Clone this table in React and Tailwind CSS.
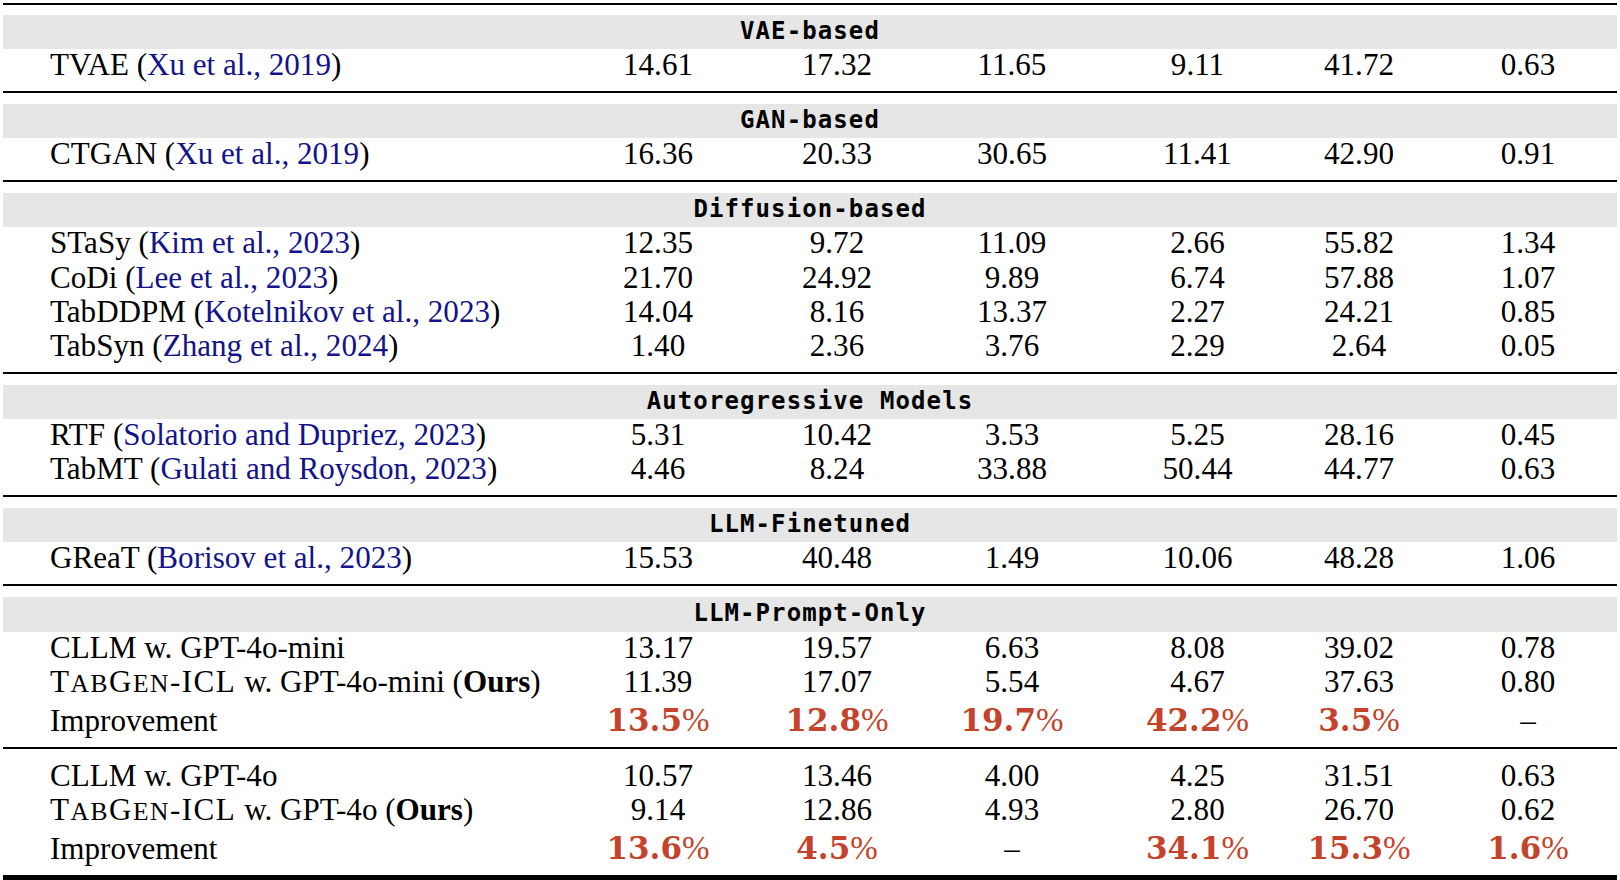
import React from "react";

const COLS = "grid grid-cols-[565.5px_179px_179px_171px_200px_123px_215px]";

function Cite({ children }) {
  return <span className="text-[#13138a]">{children}</span>;
}

function Row({ label, vals }) {
  return (
    <div className={`${COLS} h-[34.13px] text-[31.1px] leading-[32.7px]`}>
      <div className="pl-[47px] whitespace-nowrap">{label}</div>
      {vals.map((v, i) => (
        <div key={i} className="text-center whitespace-nowrap">{v}</div>
      ))}
    </div>
  );
}

function Pct({ v }) {
  if (v === "–") {
    return (
      <div className="text-center text-[31.1px] leading-[42px]">–</div>
    );
  }
  return (
    <div className="text-center whitespace-nowrap font-['DejaVu_Serif',serif] font-bold text-[31px] leading-[41.5px] text-[#c4432a]">
      {v}
      <span className="font-['Liberation_Serif',serif] font-normal text-[33px]">%</span>
    </div>
  );
}

function ImpRow({ vals }) {
  return (
    <div className={`${COLS} h-[39px]`}>
      <div className="pl-[47px] text-[31.1px] leading-[42px] whitespace-nowrap">Improvement</div>
      {vals.map((v, i) => (
        <Pct key={i} v={v} />
      ))}
    </div>
  );
}

function Header({ title }) {
  return (
    <div className="h-[34.13px] bg-[#e6e6e6] text-center font-['DejaVu_Sans_Mono',monospace] font-bold text-[24px] leading-[32.3px] tracking-[1.1px]">
      {title}
    </div>
  );
}

function Rule() {
  return <div className="h-[2px] bg-black" />;
}

function Section({ first, title, children }) {
  return (
    <div className={first ? "pt-[9.8px] pb-[7.7px]" : "pt-[11.3px] pb-[7.7px]"}>
      {title && <Header title={title} />}
      {children}
    </div>
  );
}

const Ours = () => (
  <>
    (<span className="font-bold">Ours</span>)
  </>
);

const SC = () => (
  <span className="tracking-[1.5px]">
    T<span className="text-[0.82em]">AB</span>G<span className="text-[0.82em]">EN</span>-ICL
  </span>
);

export default function App() {
  return (
    <div className="w-[1620px] h-[880px] overflow-hidden bg-white pt-[3px] text-black font-['Liberation_Serif',serif]">
      <div className="ml-[3px] w-[1614px]">
        <Rule />
        <Section first title="VAE-based">
          <Row
            label={<>TVAE (<Cite>Xu et al., 2019</Cite>)</>}
            vals={["14.61", "17.32", "11.65", "9.11", "41.72", "0.63"]}
          />
        </Section>
        <Rule />
        <Section title="GAN-based">
          <Row
            label={<>CTGAN (<Cite>Xu et al., 2019</Cite>)</>}
            vals={["16.36", "20.33", "30.65", "11.41", "42.90", "0.91"]}
          />
        </Section>
        <Rule />
        <Section title="Diffusion-based">
          <Row
            label={<>STaSy (<Cite>Kim et al., 2023</Cite>)</>}
            vals={["12.35", "9.72", "11.09", "2.66", "55.82", "1.34"]}
          />
          <Row
            label={<>CoDi (<Cite>Lee et al., 2023</Cite>)</>}
            vals={["21.70", "24.92", "9.89", "6.74", "57.88", "1.07"]}
          />
          <Row
            label={<>TabDDPM (<Cite>Kotelnikov et al., 2023</Cite>)</>}
            vals={["14.04", "8.16", "13.37", "2.27", "24.21", "0.85"]}
          />
          <Row
            label={<>TabSyn (<Cite>Zhang et al., 2024</Cite>)</>}
            vals={["1.40", "2.36", "3.76", "2.29", "2.64", "0.05"]}
          />
        </Section>
        <Rule />
        <Section title="Autoregressive Models">
          <Row
            label={<>RTF (<Cite>Solatorio and Dupriez, 2023</Cite>)</>}
            vals={["5.31", "10.42", "3.53", "5.25", "28.16", "0.45"]}
          />
          <Row
            label={<>TabMT (<Cite>Gulati and Roysdon, 2023</Cite>)</>}
            vals={["4.46", "8.24", "33.88", "50.44", "44.77", "0.63"]}
          />
        </Section>
        <Rule />
        <Section title="LLM-Finetuned">
          <Row
            label={<>GReaT (<Cite>Borisov et al., 2023</Cite>)</>}
            vals={["15.53", "40.48", "1.49", "10.06", "48.28", "1.06"]}
          />
        </Section>
        <Rule />
        <Section title="LLM-Prompt-Only">
          <Row
            label={<>CLLM w. GPT-4o-mini</>}
            vals={["13.17", "19.57", "6.63", "8.08", "39.02", "0.78"]}
          />
          <Row
            label={<><SC /> w. GPT-4o-mini <Ours /></>}
            vals={["11.39", "17.07", "5.54", "4.67", "37.63", "0.80"]}
          />
          <ImpRow vals={["13.5", "12.8", "19.7", "42.2", "3.5", "–"]} />
        </Section>
        <Rule />
        <Section>
          <Row
            label={<>CLLM w. GPT-4o</>}
            vals={["10.57", "13.46", "4.00", "4.25", "31.51", "0.63"]}
          />
          <Row
            label={<><SC /> w. GPT-4o <Ours /></>}
            vals={["9.14", "12.86", "4.93", "2.80", "26.70", "0.62"]}
          />
          <ImpRow vals={["13.6", "4.5", "–", "34.1", "15.3", "1.6"]} />
        </Section>
        <div className="h-[5px] bg-black" />
      </div>
    </div>
  );
}
